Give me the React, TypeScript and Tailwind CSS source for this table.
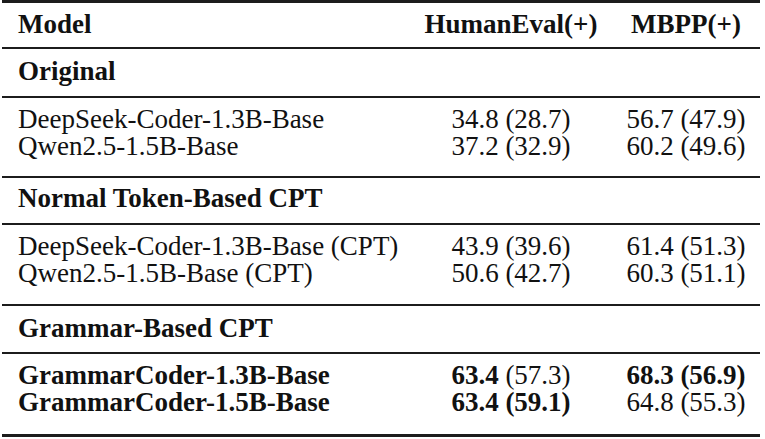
import React from "react";

type Cell = React.ReactNode;

function Row({ a, b, c, bold }: { a: Cell; b?: Cell; c?: Cell; bold?: boolean }) {
  return (
    <div className={"flex " + (bold ? "font-bold" : "")}>
      <div className="w-[418px] pl-[16px] whitespace-nowrap">{a}</div>
      <div className="w-[182px] text-center whitespace-nowrap">{b}</div>
      <div className="w-[158px] pl-[10px] text-center whitespace-nowrap">{c}</div>
    </div>
  );
}

function Rule() {
  return <div className="h-[2px] bg-[#1c1c1c]" />;
}

export default function App() {
  return (
    <div
      className="w-[765px] h-[439px] bg-white text-[#111] text-[27px] leading-[27px] overflow-hidden"
      style={{ fontFamily: '"Liberation Serif", "Times New Roman", serif' }}
    >
      <div className="ml-[2px] w-[758px] border-t-[3px] border-b-[3px] border-[#1c1c1c]">
        <div className="pt-[8px] pb-[9px]">
          <Row a="Model" b="HumanEval(+)" c="MBPP(+)" bold />
        </div>
        <Rule />
        <div className="pt-[9px] pb-[11px]">
          <Row a="Original" bold />
        </div>
        <Rule />
        <div className="pt-[8px] pb-[16px]">
          <Row a="DeepSeek-Coder-1.3B-Base" b="34.8 (28.7)" c="56.7 (47.9)" />
          <Row a="Qwen2.5-1.5B-Base" b="37.2 (32.9)" c="60.2 (49.6)" />
        </div>
        <Rule />
        <div className="pt-[7px] pb-[11px]">
          <Row a="Normal Token-Based CPT" bold />
        </div>
        <Rule />
        <div className="pt-[8px] pb-[17px]">
          <Row a="DeepSeek-Coder-1.3B-Base (CPT)" b="43.9 (39.6)" c="61.4 (51.3)" />
          <Row a="Qwen2.5-1.5B-Base (CPT)" b="50.6 (42.7)" c="60.3 (51.1)" />
        </div>
        <Rule />
        <div className="pt-[9px] pb-[10px]">
          <Row a="Grammar-Based CPT" bold />
        </div>
        <Rule />
        <div className="pt-[8px] pb-[18px]">
          <Row
            a={<span className="font-bold">GrammarCoder-1.3B-Base</span>}
            b={
              <>
                <span className="font-bold">63.4</span> (57.3)
              </>
            }
            c={<span className="font-bold">68.3 (56.9)</span>}
          />
          <Row
            a={<span className="font-bold">GrammarCoder-1.5B-Base</span>}
            b={<span className="font-bold">63.4 (59.1)</span>}
            c="64.8 (55.3)"
          />
        </div>
      </div>
    </div>
  );
}
